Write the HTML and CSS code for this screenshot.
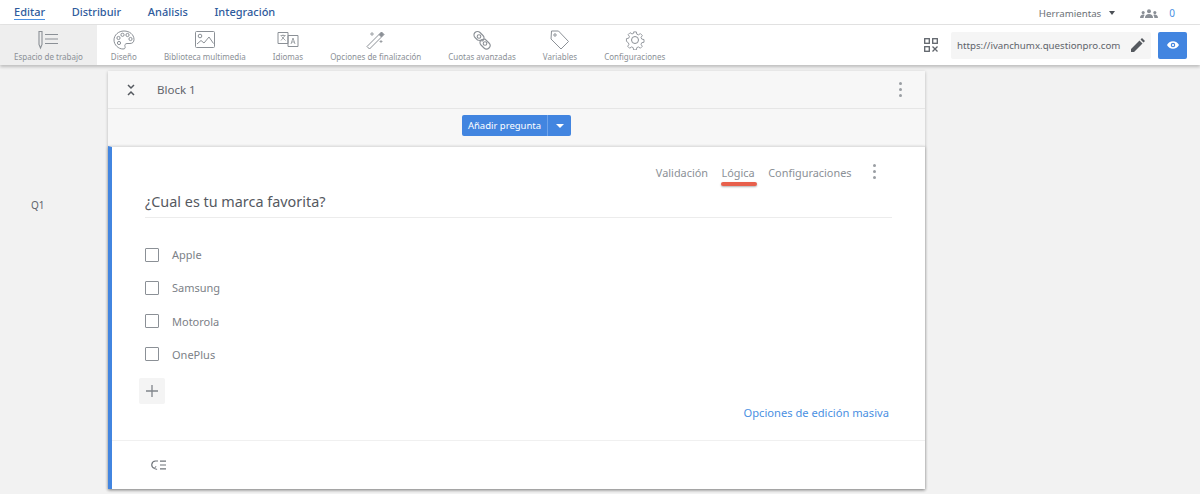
FILE: index.html
```html
<!DOCTYPE html>
<html lang="es">
<head>
<meta charset="utf-8">
<title>Editar encuesta</title>
<link rel="stylesheet" href="styles.css">
</head>
<body>
<header class="topbar">
  <nav class="mainnav">
    <a class="mainlink active">Editar</a>
    <a class="mainlink">Distribuir</a>
    <a class="mainlink">Análisis</a>
    <a class="mainlink">Integración</a>
  </nav>
  <div class="tools">
    <span class="toolname">Herramientas</span>
    <span class="caret dark"></span>
    <svg class="people" viewBox="0 0 20 10" width="18" height="9"><g fill="#8a8f96"><circle cx="10" cy="2.500" r="2.200"/><path d="M5.500 10c0-3 2-4.500 4.500-4.500s4.500 1.500 4.500 4.500z"/><circle cx="3.500" cy="4" r="1.700"/><path d="M0 10c0-2.400 1.500-3.800 3.500-3.800.7 0 1.200.1 1.700.4-.8.900-1.200 2-1.200 3.400z"/><circle cx="16.500" cy="4" r="1.700"/><path d="M20 10c0-2.400-1.500-3.800-3.500-3.800-.7 0-1.200.1-1.700.4.800.9 1.200 2 1.200 3.400z"/></g></svg>
    <span class="count">0</span>
  </div>
</header>
<section class="toolbar">
  <div class="tabs">
    <div class="tab current">
      <svg viewBox="0 0 24 20" width="24" height="20" fill="none" stroke="#8b9096"><path d="M3 1.500h3v13l-1.500 3.500-1.500-3.500z" stroke-width="1.100"/><path d="M9 4.500h13M9 9h13M9 13.500h13" stroke-width="1.200"/></svg>
      <span>Espacio de trabajo</span>
    </div>
    <div class="tab">
      <svg viewBox="0 0 22 20" width="22" height="20" fill="none" stroke="#8b9096" stroke-width="1"><path d="M11 1C5.500 1 1 5 1 10s4.500 9 9 9c2 0 2.500-1.200 2-2.500-.6-1.500.3-3 2-3h3c2.500 0 4-1.500 4-4C21 4.500 16.500 1 11 1z"/><circle cx="5.500" cy="8" r="1.600"/><circle cx="9.500" cy="4.800" r="1.600"/><circle cx="14.500" cy="5" r="1.600"/><circle cx="17.500" cy="9" r="1.600"/><circle cx="6" cy="13" r="1.600"/></svg>
      <span>Diseño</span>
    </div>
    <div class="tab">
      <svg viewBox="0 0 20 17" width="20" height="17" fill="none" stroke="#8b9096" stroke-width="1"><rect x=".5" y=".5" width="19" height="16" rx="1"/><circle cx="5" cy="5" r="1.800"/><path d="M2 13l4-3.500 3 2.500 5-6 4.500 6.500"/></svg>
      <span>Biblioteca multimedia</span>
    </div>
    <div class="tab">
      <svg viewBox="0 0 22 15" width="22" height="15" fill="none" stroke="#8b9096" stroke-width="1"><path d="M1 .5h10v11H1z"/><path d="M11 3.500h10v11H11z"/><path d="M3.500 3.500h5M6 2.500v1M4 8.500l4-5M4.500 4.500l4 4" stroke-width=".8"/><path d="M14 12l2-6 2 6M14.800 10h2.500" stroke-width=".8"/></svg>
      <span>Idiomas</span>
    </div>
    <div class="tab">
      <svg viewBox="0 0 20 20" width="20" height="20" fill="none" stroke="#8b9096" stroke-width="1"><path d="M1 16.500L13 4.500l2.500 2.500L3.500 19z"/><path d="M13 4.500l2.500-2.500 2.500 2.500-2.500 2.500" fill="#8b9096"/><path d="M6 2v4M4 4h4M15 10v3M13.500 11.500h3" stroke-width=".8"/></svg>
      <span>Opciones de finalización</span>
    </div>
    <div class="tab">
      <svg viewBox="0 0 20 20" width="20" height="20" fill="none" stroke="#8b9096" stroke-width="1.100"><path d="M3 2.500a3.500 3.500 0 0 1 5 0l3 3a3.500 3.500 0 0 1 0 5l-.5.500-5-1-2.500-2.500a3.500 3.500 0 0 1 0-5z"/><circle cx="7" cy="6.500" r="1.800"/><path d="M10 9.500l3-.5 4 4a3.500 3.500 0 0 1-5 5l-3-3a3.500 3.500 0 0 1 0-5z"/><circle cx="13" cy="13.500" r="1.800"/></svg>
      <span>Cuotas avanzadas</span>
    </div>
    <div class="tab">
      <svg viewBox="0 0 20 20" width="20" height="20" fill="none" stroke="#8b9096" stroke-width="1"><path d="M1.500 1h7l10 10.500-7.500 7.500L1 9z" stroke-linejoin="round"/><circle cx="5" cy="5" r="1.200"/></svg>
      <span>Variables</span>
    </div>
    <div class="tab">
      <svg viewBox="0 0 20 20" width="20" height="20" fill="none" stroke="#8b9096" stroke-width="1" stroke-linejoin="round"><circle cx="10" cy="10" r="3.500"/><path d="M8.500 1h3l.5 2.500 1.800.8 2.200-1.400 2.100 2.100-1.400 2.200.8 1.800 2.500.5v3l-2.500.5-.8 1.800 1.400 2.200-2.100 2.100-2.200-1.400-1.800.8-.5 2.500h-3l-.5-2.500-1.800-.8-2.200 1.400-2.100-2.100 1.400-2.200-.8-1.800L.5 11.500v-3l2.500-.5.800-1.800-1.400-2.200 2.100-2.100 2.200 1.400 1.800-.8z" transform="translate(1 1) scale(.9)"/></svg>
      <span>Configuraciones</span>
    </div>
  </div>
  <div class="share">
    <svg class="qr" viewBox="0 0 14 14" width="14" height="14" fill="none" stroke="#5f646b" stroke-width="1.300"><rect x=".7" y=".7" width="4.600" height="4.600"/><rect x="8.700" y=".7" width="4.600" height="4.600"/><rect x=".7" y="8.700" width="4.600" height="4.600"/><path d="M8.500 8.500l5 5M13.500 8.500l-5 5"/></svg>
    <div class="urlbox">
      <span class="url">https://ivanchumx.questionpro.com</span>
      <svg viewBox="0 0 14 14" width="14" height="14" fill="#55595f"><path d="M0 14v-3L8.500 2.500l3 3L3 14zM9.500 1.500L11 0l3 3-1.500 1.500z"/></svg>
    </div>
    <button class="preview" type="button" aria-label="Vista previa">
      <svg viewBox="0 0 16 10" width="12" height="8"><path fill="#fff" fill-rule="evenodd" d="M8 0c3.500 0 6.500 2 8 5-1.500 3-4.500 5-8 5S1.500 8 0 5c1.500-3 4.500-5 8-5zm0 2a3 3 0 1 0 0 6 3 3 0 0 0 0-6z"/><circle cx="8" cy="5" r="1.500" fill="#fff"/></svg>
    </button>
  </div>
</section>
<main class="workspace">
  <div class="qlabel">Q1</div>
  <div class="block">
    <div class="blockhead">
      <svg class="collapse" viewBox="0 0 8 12" width="8" height="12" fill="none" stroke="#55595f" stroke-width="1.500"><path d="M1 1l3 3 3-3M1 11l3-3 3 3"/></svg>
      <span class="blocktitle">Block 1</span>
      <span class="kebab"><i></i><i></i><i></i></span>
    </div>
    <div class="addrow">
      <div class="split">
        <span class="splitmain">Añadir pregunta</span>
        <span class="splitcaret"><span class="caret"></span></span>
      </div>
    </div>
    <article class="question">
      <div class="qtabs">
        <span class="qtab">Validación</span>
        <span class="qtab marked">Lógica</span>
        <span class="qtab">Configuraciones</span>
        <span class="kebab"><i></i><i></i><i></i></span>
      </div>
      <h2 class="qtitle">¿Cual es tu marca favorita?</h2>
      <ul class="options">
        <li class="option"><span class="check"></span>Apple</li>
        <li class="option"><span class="check"></span>Samsung</li>
        <li class="option"><span class="check"></span>Motorola</li>
        <li class="option"><span class="check"></span>OnePlus</li>
      </ul>
      <div class="plus"><svg viewBox="0 0 12 12" width="12" height="12" stroke="#80858b" stroke-width="1.300"><path d="M6 0v12M0 6h12"/></svg></div>
      <div class="bulk"><a>Opciones de edición masiva</a></div>
      <div class="qfoot">
        <svg viewBox="0 0 15 10" width="15" height="10" fill="none" stroke="#6f747a" stroke-width="1.200"><path d="M7 1H4.500a3.700 3.700 0 0 0-1.200 7.200"/><path d="M5 6.200L3.300 8.600l2.800.8" stroke-width="1"/><path d="M9 1.200h6M9 5h6M9 8.800h6"/></svg>
      </div>
    </article>
  </div>
</main>
</body>
</html>
```
FILE: styles.css
```css
* { box-sizing: border-box; }
html, body { margin: 0; height: 494px; overflow: hidden; }
body { font-family: "Noto Sans", "Open Sans", sans-serif; background: #f2f2f2; color: #5f646b; }

.topbar { height: 25px; background: #fff; border-bottom: 1px solid #e4e4e4; display: flex; justify-content: space-between; align-items: center; padding: 2px 25px 0 14px; }
.mainnav { display: flex; gap: 26.600px; }
.mainlink { font-size: 11px; font-weight: 500; color: #2f5b9c; line-height: 12px; padding-bottom: 1px; border-bottom: 1px solid transparent; }
.mainlink.active { border-bottom-color: #4a90e2; }
.tools { display: flex; align-items: center; }
.toolname { font-size: 9.700px; color: #6b7076; }
.caret { width: 0; height: 0; border-left: 4px solid transparent; border-right: 4px solid transparent; border-top: 4px solid #fff; display: block; }
.caret.dark { border-top-color: #4c5056; margin-left: 8px; border-left-width: 3.500px; border-right-width: 3.500px; }
.people { margin-left: 25px; }
.count { font-size: 10px; color: #4a90e2; margin-left: 11px; }

.toolbar { height: 40px; background: #fff; display: flex; justify-content: space-between; box-shadow: 0 2px 3px rgba(0, 0, 0, .22); position: relative; }
.tabs { display: flex; }
.tab { display: flex; flex-direction: column; align-items: center; justify-content: flex-end; padding: 3px 13.500px 2px; font-size: 8px; line-height: 12px; color: #8b9096; white-space: nowrap; }
.tab svg { margin: auto 0; }
.tab.current { background: #eeeeee; padding-left: 14px; padding-right: 14.500px; }
.share { display: flex; align-items: center; padding-right: 13px; }
.qr { margin-right: 13px; }
.urlbox { width: 200px; height: 27px; background: #f5f5f5; border-radius: 2px; display: flex; align-items: center; justify-content: space-between; padding: 0 6.500px 0 6px; margin-right: 7px; }
.url { font-size: 9.700px; color: #5f646b; white-space: nowrap; }
.preview { width: 29px; height: 27px; background: #4285e0; border: 0; border-radius: 2px; padding: 0; display: flex; align-items: center; justify-content: center; }

.workspace { display: flex; padding: 6px 0 0 31px; height: 429px; }
.qlabel { width: 77px; margin-top: 127px; font-size: 10px; line-height: 14px; color: #5f646b; }
.block { width: 817px; flex: none; background: #f7f7f7; box-shadow: 0 1px 3px rgba(0, 0, 0, .25); height: 418px; }
.blockhead { height: 38px; display: flex; align-items: center; border-bottom: 1px solid #e6e6e6; padding: 0 23px 0 19px; }
.collapse { margin-right: 22px; }
.blocktitle { font-size: 11.500px; color: #5f646b; flex: 1; }
.kebab { display: flex; flex-direction: column; gap: 3px; }
.kebab i { width: 3px; height: 3px; border-radius: 50%; background: #9a9ea3; display: block; }
.addrow { height: 37px; display: flex; align-items: center; justify-content: center; padding-bottom: 4px; }
.split { display: flex; height: 21px; background: #4285e0; color: #fff; border-radius: 2px; font-size: 9.500px; line-height: 21px; }
.splitmain { padding: 0 6px; border-right: 1px solid #6fa3ea; }
.splitcaret { width: 23px; display: flex; align-items: center; justify-content: center; }
.question { height: 343px; background: #fff; border-left: 4px solid #4285e0; border-top: 1px solid #e0e0e0; box-shadow: 0 1px 3px rgba(0, 0, 0, .3); display: flex; flex-direction: column; padding-left: 33px; }
.qtabs { display: flex; justify-content: flex-end; align-items: center; gap: 13.500px; height: 20px; margin-top: 16px; padding-right: 49px; font-size: 10.900px; color: #8b9096; }
.qtab { position: relative; line-height: 16px; }
.qtab.marked::after { content: ""; position: absolute; left: -1px; right: -2px; top: 17px; height: 4px; border-radius: 2px; background: #e8604c; box-shadow: 0 1px 2px rgba(0, 0, 0, .3); }
.qtabs .kebab { margin-left: 8px; margin-top: -4px; }
.qtitle { margin: 9px 33px 0 0; padding-bottom: 5px; height: 26px; font-size: 14.400px; line-height: 20px; font-weight: 400; color: #55595f; border-bottom: 1px solid #ececec; white-space: nowrap; }
.options { list-style: none; margin: 26.500px 0 0; padding: 0; display: flex; flex-direction: column; gap: 13.300px; }
.option { display: flex; align-items: center; height: 20px; font-size: 11px; color: #7c8187; }
.check { width: 14px; height: 14px; border: 1.500px solid #8b9096; border-radius: 1px; margin-right: 13px; background: #fff; }
.plus { width: 26px; height: 26px; background: #f4f4f4; border-radius: 2px; margin: 13.500px 0 0 -6px; display: flex; align-items: center; justify-content: center; }
.bulk { text-align: right; padding-right: 36px; margin-top: 1px; font-size: 11.150px; line-height: 16px; color: #4a90e2; }
.qfoot { border-top: 1px solid #f0f0f0; margin: 19px 0 0 -33px; padding: 19px 0 0 39px; flex: 1; }
.qfoot svg { display: block; }
```
